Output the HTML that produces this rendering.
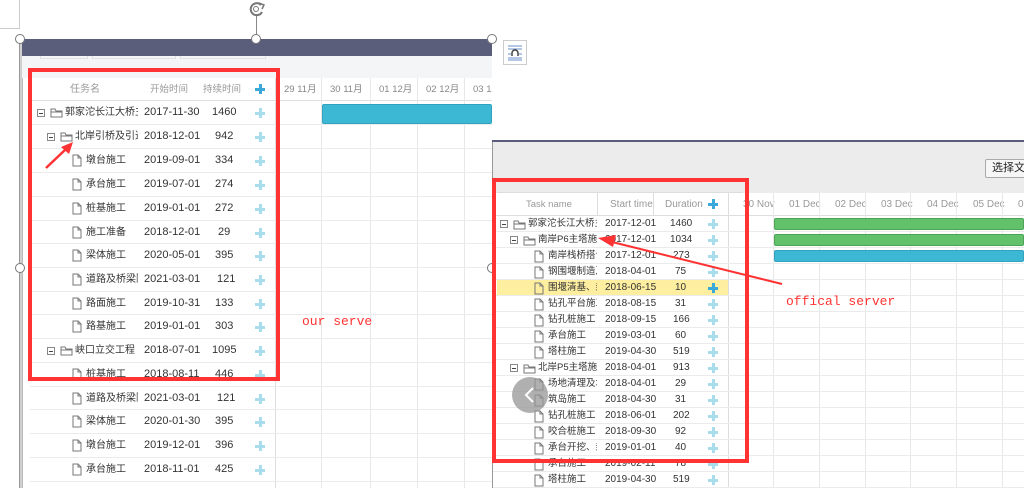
<!DOCTYPE html>
<html><head><meta charset="utf-8">
<style>
*{margin:0;padding:0;box-sizing:border-box}
body{width:1024px;height:488px;overflow:hidden;background:#fff;position:relative;font-family:"Liberation Sans","Noto Sans CJK SC",sans-serif;color:#333}
.a{position:absolute}
.L{font-size:11px}
.R{font-size:10px}
.row{position:absolute;left:0;border-bottom:1px solid #ebebeb}
.row span{position:absolute;white-space:nowrap;overflow:hidden}
.L .row span{top:0!important;line-height:23px;height:23px}
.R .row span{top:0!important;line-height:15px;height:15px}
.L .row span:nth-of-type(1){font-size:10px}
.R .row span:nth-of-type(1){font-size:9.5px}
.p{position:absolute;width:10px;height:10px}
.p:before{content:"";position:absolute;left:3.5px;top:0;width:3px;height:10px;background:#a9dcec}
.p:after{content:"";position:absolute;left:0;top:3.5px;width:10px;height:3px;background:#a9dcec}
.p.d:before,.p.d:after{background:#3aa8d8}
.ex{position:absolute;width:8px;height:8px;border:1px solid #888;background:#fff}
.ex:after{content:"";position:absolute;left:1px;top:2.5px;width:4px;height:1px;background:#444}
.ic{position:absolute}
.vl{position:absolute;width:1px;background:#e8e8e8}
.h{position:absolute;width:10px;height:10px;border:1.5px solid #777;border-radius:50%;background:#fff}
</style></head><body>

<div class="a" style="left:0;top:0;width:20px;height:29px;border-right:1px solid #ccc;border-bottom:1px solid #ccc"></div>
<div class="a" style="left:19px;top:40px;width:5px;height:448px;background:#d0d0d0;border-left:1px solid #999"></div>

<div class="a" style="left:22px;top:39px;width:470px;height:449px;background:#fff;border-left:1px solid #bbb;border-right:1px solid #bbb"></div>
<div class="a" style="left:22px;top:39px;width:470px;height:17px;background:#5b5e7b"></div>
<div class="a" style="left:22px;top:56px;width:470px;height:22px;background:#f4f5f7"></div>
<div class="a" style="left:40px;top:56px;width:48px;height:3px;border:1px solid #e2e2e2;border-top:none"></div>
<div class="a" style="left:92px;top:56px;width:84px;height:3px;border:1px solid #e2e2e2;border-top:none"></div>
<div class="a" style="left:180px;top:56px;width:86px;height:3px;border:1px solid #e2e2e2;border-top:none"></div>

<div class="a L" style="left:30px;top:78px;width:462px;height:410px;overflow:hidden;background:#fff">
 <div class="row" style="top:0;width:462px;height:23px;border-bottom:1px solid #e0e0e0;color:#999;font-size:9.5px">
  <span style="left:40px">任务名</span><span style="left:120px">开始时间</span><span style="left:173px">持续时间</span>
  <div class="p d" style="left:225px;top:6px"></div>
  <span style="left:254px;color:#888">29 11月</span><span style="left:300px;color:#888">30 11月</span><span style="left:349px;color:#888">01 12月</span><span style="left:396px;color:#888">02 12月</span><span style="left:443px;color:#888">03 12月</span>
 </div>
 <div class="vl" style="left:245px;top:0;height:410px;background:#ddd"></div>
 <div class="vl" style="left:291px;top:0;height:410px"></div>
 <div class="vl" style="left:340px;top:0;height:410px"></div>
 <div class="vl" style="left:387px;top:0;height:410px"></div>
 <div class="vl" style="left:434px;top:0;height:410px"></div>
 <div class="a" style="left:292px;top:26px;width:170px;height:20px;background:#3db8d4;border:1px solid #2fa3c0;border-radius:2px"></div>

 <div class="row" style="top:23px;width:462px;height:24px"><div class="ex" style="left:7px;top:8px"></div><svg class="ic" style="left:20px;top:6px" width="13" height="11"><path d="M1 3V10H12V4H6L5 2H1Z M1 5H12" fill="none" stroke="#777"/></svg><span style="left:35px;width:73px">郭家沱长江大桥主</span><span style="left:114px">2017-11-30</span><span style="left:182px">1460</span><div class="p" style="left:225px;top:7px"></div></div>
 <div class="row" style="top:47px;width:462px;height:24px"><div class="ex" style="left:17px;top:8px"></div><svg class="ic" style="left:30px;top:6px" width="13" height="11"><path d="M1 3V10H12V4H6L5 2H1Z M1 5H12" fill="none" stroke="#777"/></svg><span style="left:45px;width:63px">北岸引桥及引道</span><span style="left:114px">2018-12-01</span><span style="left:185px">942</span><div class="p" style="left:225px;top:7px"></div></div>
 <div class="row" style="top:71px;width:462px;height:24px"><svg class="ic" style="left:42px;top:5px" width="10" height="13"><path d="M1 1H6L9 4V12H1Z M6 1V4H9" fill="none" stroke="#777"/></svg><span style="left:56px">墩台施工</span><span style="left:114px">2019-09-01</span><span style="left:185px">334</span><div class="p" style="left:225px;top:7px"></div></div>
 <div class="row" style="top:95px;width:462px;height:24px"><svg class="ic" style="left:42px;top:5px" width="10" height="13"><path d="M1 1H6L9 4V12H1Z M6 1V4H9" fill="none" stroke="#777"/></svg><span style="left:56px">承台施工</span><span style="left:114px">2019-07-01</span><span style="left:185px">274</span><div class="p" style="left:225px;top:7px"></div></div>
 <div class="row" style="top:119px;width:462px;height:24px"><svg class="ic" style="left:42px;top:5px" width="10" height="13"><path d="M1 1H6L9 4V12H1Z M6 1V4H9" fill="none" stroke="#777"/></svg><span style="left:56px">桩基施工</span><span style="left:114px">2019-01-01</span><span style="left:185px">272</span><div class="p" style="left:225px;top:7px"></div></div>
 <div class="row" style="top:143px;width:462px;height:23px"><svg class="ic" style="left:42px;top:5px" width="10" height="13"><path d="M1 1H6L9 4V12H1Z M6 1V4H9" fill="none" stroke="#777"/></svg><span style="left:56px">施工准备</span><span style="left:114px">2018-12-01</span><span style="left:188px">29</span><div class="p" style="left:225px;top:7px"></div></div>
 <div class="row" style="top:166px;width:462px;height:24px"><svg class="ic" style="left:42px;top:5px" width="10" height="13"><path d="M1 1H6L9 4V12H1Z M6 1V4H9" fill="none" stroke="#777"/></svg><span style="left:56px">梁体施工</span><span style="left:114px">2020-05-01</span><span style="left:185px">395</span><div class="p" style="left:225px;top:7px"></div></div>
 <div class="row" style="top:190px;width:462px;height:24px"><svg class="ic" style="left:42px;top:5px" width="10" height="13"><path d="M1 1H6L9 4V12H1Z M6 1V4H9" fill="none" stroke="#777"/></svg><span style="left:56px;width:52px">道路及桥梁附</span><span style="left:114px">2021-03-01</span><span style="left:187px">121</span><div class="p" style="left:225px;top:7px"></div></div>
 <div class="row" style="top:214px;width:462px;height:23px"><svg class="ic" style="left:42px;top:5px" width="10" height="13"><path d="M1 1H6L9 4V12H1Z M6 1V4H9" fill="none" stroke="#777"/></svg><span style="left:56px">路面施工</span><span style="left:114px">2019-10-31</span><span style="left:185px">133</span><div class="p" style="left:225px;top:7px"></div></div>
 <div class="row" style="top:237px;width:462px;height:24px"><svg class="ic" style="left:42px;top:5px" width="10" height="13"><path d="M1 1H6L9 4V12H1Z M6 1V4H9" fill="none" stroke="#777"/></svg><span style="left:56px">路基施工</span><span style="left:114px">2019-01-01</span><span style="left:185px">303</span><div class="p" style="left:225px;top:7px"></div></div>
 <div class="row" style="top:261px;width:462px;height:24px"><div class="ex" style="left:17px;top:8px"></div><svg class="ic" style="left:30px;top:6px" width="13" height="11"><path d="M1 3V10H12V4H6L5 2H1Z M1 5H12" fill="none" stroke="#777"/></svg><span style="left:45px">峡口立交工程</span><span style="left:114px">2018-07-01</span><span style="left:182px">1095</span><div class="p" style="left:225px;top:7px"></div></div>
 <div class="row" style="top:285px;width:462px;height:24px"><svg class="ic" style="left:42px;top:5px" width="10" height="13"><path d="M1 1H6L9 4V12H1Z M6 1V4H9" fill="none" stroke="#777"/></svg><span style="left:56px">桩基施工</span><span style="left:114px">2018-08-11</span><span style="left:185px">446</span><div class="p" style="left:225px;top:7px"></div></div>
 <div class="row" style="top:309px;width:462px;height:23px"><svg class="ic" style="left:42px;top:5px" width="10" height="13"><path d="M1 1H6L9 4V12H1Z M6 1V4H9" fill="none" stroke="#777"/></svg><span style="left:56px;width:52px">道路及桥梁附</span><span style="left:114px">2021-03-01</span><span style="left:187px">121</span><div class="p" style="left:225px;top:7px"></div></div>
 <div class="row" style="top:332px;width:462px;height:24px"><svg class="ic" style="left:42px;top:5px" width="10" height="13"><path d="M1 1H6L9 4V12H1Z M6 1V4H9" fill="none" stroke="#777"/></svg><span style="left:56px">梁体施工</span><span style="left:114px">2020-01-30</span><span style="left:185px">395</span><div class="p" style="left:225px;top:7px"></div></div>
 <div class="row" style="top:356px;width:462px;height:24px"><svg class="ic" style="left:42px;top:5px" width="10" height="13"><path d="M1 1H6L9 4V12H1Z M6 1V4H9" fill="none" stroke="#777"/></svg><span style="left:56px">墩台施工</span><span style="left:114px">2019-12-01</span><span style="left:185px">396</span><div class="p" style="left:225px;top:7px"></div></div>
 <div class="row" style="top:380px;width:462px;height:24px"><svg class="ic" style="left:42px;top:5px" width="10" height="13"><path d="M1 1H6L9 4V12H1Z M6 1V4H9" fill="none" stroke="#777"/></svg><span style="left:56px">承台施工</span><span style="left:114px">2018-11-01</span><span style="left:185px">425</span><div class="p" style="left:225px;top:7px"></div></div>
</div>

<div class="a" style="left:256px;top:14px;width:1px;height:25px;background:#888"></div>
<svg class="a" style="left:246px;top:0" width="22" height="18"><path d="M15 5A6 6 0 1 0 16 12" fill="none" stroke="#777" stroke-width="2"/><path d="M13 3L18 5L16 9" fill="none" stroke="#777" stroke-width="1.5"/><circle cx="10" cy="9" r="2.5" fill="none" stroke="#777"/></svg>
<div class="h" style="left:15px;top:34px"></div>
<div class="h" style="left:251px;top:34px"></div>
<div class="h" style="left:487px;top:34px"></div>
<div class="h" style="left:15px;top:263px"></div>
<div class="h" style="left:487px;top:263px"></div>
<div class="a" style="left:503px;top:40px;width:24px;height:25px;border:1px solid #ccc;background:#fff"></div>
<svg class="a" style="left:506px;top:44px" width="18" height="18"><path d="M2 2H16M2 5H16M2 14H16M2 16H16M2 10H5M13 10H16" stroke="#6a8fc8"/><path d="M6 12V9A3 3 0 0 1 12 9V12" fill="none" stroke="#444" stroke-width="1.5"/></svg>

<div class="a" style="left:492px;top:140px;width:532px;height:2px;background:#5b5e7b"></div>
<div class="a" style="left:492px;top:142px;width:532px;height:346px;background:#ececec;border-left:1px solid #999"></div>
<div class="a" style="left:985px;top:159px;width:45px;height:19px;border:1px solid #aaa;background:#f6f6f6;border-radius:2px;font-size:11px;line-height:17px;padding-left:6px;color:#222">选择文</div>
<div class="a R" style="left:493px;top:193px;width:531px;height:295px;background:#fff;overflow:hidden">
 <div class="row" style="top:0;width:531px;height:23px;border-bottom:1px solid #ddd;color:#999">
  <span style="left:33px;line-height:23px;height:23px">Task name</span><span style="left:117px;line-height:23px;height:23px">Start time</span><span style="left:172px;line-height:23px;height:23px">Duration</span>
  <div class="p d" style="left:215px;top:6px"></div>
  <span style="left:250px;line-height:23px;height:23px">30 Nov</span><span style="left:296px;line-height:23px;height:23px">01 Dec</span><span style="left:342px;line-height:23px;height:23px">02 Dec</span><span style="left:388px;line-height:23px;height:23px">03 Dec</span><span style="left:434px;line-height:23px;height:23px">04 Dec</span><span style="left:480px;line-height:23px;height:23px">05 Dec</span><span style="left:525px;line-height:23px;height:23px">06</span>
 </div>
 <div class="vl" style="left:104px;top:0;height:23px;background:#ddd"></div>
 <div class="vl" style="left:160px;top:0;height:23px;background:#ddd"></div>
 <div class="vl" style="left:235px;top:0;height:295px;background:#ddd"></div>
 <div class="vl" style="left:280px;top:0;height:295px"></div>
 <div class="vl" style="left:326px;top:0;height:295px"></div>
 <div class="vl" style="left:372px;top:0;height:295px"></div>
 <div class="vl" style="left:417px;top:0;height:295px"></div>
 <div class="vl" style="left:463px;top:0;height:295px"></div>
 <div class="vl" style="left:509px;top:0;height:295px"></div>
 <div class="a" style="left:4px;top:87px;width:231px;height:16px;background:#fdeea0"></div>
 <div class="a" style="left:281px;top:25px;width:250px;height:12px;background:#63c16b;border:1px solid #4ea456;border-radius:2px"></div>
 <div class="a" style="left:281px;top:41px;width:250px;height:12px;background:#63c16b;border:1px solid #4ea456;border-radius:2px"></div>
 <div class="a" style="left:281px;top:57px;width:250px;height:12px;background:#3db8d4;border:1px solid #2fa3c0;border-radius:2px"></div>

 <div class="row" style="top:23px;width:531px;height:16px"><div class="ex" style="left:7px;top:4px"></div><svg class="ic" style="left:20px;top:3px" width="13" height="11"><path d="M1 3V10H12V4H6L5 2H1Z M1 5H12" fill="none" stroke="#777"/></svg><span style="left:35px;width:69px">郭家沱长江大桥主</span><span style="left:112px">2017-12-01</span><span style="left:177px">1460</span><div class="p" style="left:215px;top:3px"></div></div>
 <div class="row" style="top:39px;width:531px;height:16px"><div class="ex" style="left:17px;top:4px"></div><svg class="ic" style="left:30px;top:3px" width="13" height="11"><path d="M1 3V10H12V4H6L5 2H1Z M1 5H12" fill="none" stroke="#777"/></svg><span style="left:45px;width:59px">南岸P6主塔施工</span><span style="left:112px">2017-12-01</span><span style="left:177px">1034</span><div class="p" style="left:215px;top:3px"></div></div>
 <div class="row" style="top:55px;width:531px;height:16px"><svg class="ic" style="left:41px;top:2px" width="10" height="13"><path d="M1 1H6L9 4V12H1Z M6 1V4H9" fill="none" stroke="#777"/></svg><span style="left:55px;width:49px">南岸栈桥搭设</span><span style="left:112px">2017-12-01</span><span style="left:180px">273</span><div class="p" style="left:215px;top:3px"></div></div>
 <div class="row" style="top:71px;width:531px;height:16px"><svg class="ic" style="left:41px;top:2px" width="10" height="13"><path d="M1 1H6L9 4V12H1Z M6 1V4H9" fill="none" stroke="#777"/></svg><span style="left:55px;width:49px">钢围堰制造及</span><span style="left:112px">2018-04-01</span><span style="left:182px">75</span><div class="p" style="left:215px;top:3px"></div></div>
 <div class="row" style="top:87px;width:531px;height:16px"><svg class="ic" style="left:41px;top:2px" width="10" height="13"><path d="M1 1H6L9 4V12H1Z M6 1V4H9" fill="none" stroke="#777"/></svg><span style="left:55px;width:49px">围堰清基、封</span><span style="left:112px">2018-06-15</span><span style="left:182px">10</span><div class="p d" style="left:215px;top:3px"></div></div>
 <div class="row" style="top:103px;width:531px;height:16px"><svg class="ic" style="left:41px;top:2px" width="10" height="13"><path d="M1 1H6L9 4V12H1Z M6 1V4H9" fill="none" stroke="#777"/></svg><span style="left:55px;width:49px">钻孔平台施工</span><span style="left:112px">2018-08-15</span><span style="left:182px">31</span><div class="p" style="left:215px;top:3px"></div></div>
 <div class="row" style="top:119px;width:531px;height:16px"><svg class="ic" style="left:41px;top:2px" width="10" height="13"><path d="M1 1H6L9 4V12H1Z M6 1V4H9" fill="none" stroke="#777"/></svg><span style="left:55px">钻孔桩施工</span><span style="left:112px">2018-09-15</span><span style="left:180px">166</span><div class="p" style="left:215px;top:3px"></div></div>
 <div class="row" style="top:135px;width:531px;height:16px"><svg class="ic" style="left:41px;top:2px" width="10" height="13"><path d="M1 1H6L9 4V12H1Z M6 1V4H9" fill="none" stroke="#777"/></svg><span style="left:55px">承台施工</span><span style="left:112px">2019-03-01</span><span style="left:182px">60</span><div class="p" style="left:215px;top:3px"></div></div>
 <div class="row" style="top:151px;width:531px;height:16px"><svg class="ic" style="left:41px;top:2px" width="10" height="13"><path d="M1 1H6L9 4V12H1Z M6 1V4H9" fill="none" stroke="#777"/></svg><span style="left:55px">塔柱施工</span><span style="left:112px">2019-04-30</span><span style="left:180px">519</span><div class="p" style="left:215px;top:3px"></div></div>
 <div class="row" style="top:167px;width:531px;height:16px"><div class="ex" style="left:17px;top:4px"></div><svg class="ic" style="left:30px;top:3px" width="13" height="11"><path d="M1 3V10H12V4H6L5 2H1Z M1 5H12" fill="none" stroke="#777"/></svg><span style="left:45px;width:59px">北岸P5主塔施工</span><span style="left:112px">2018-04-01</span><span style="left:180px">913</span><div class="p" style="left:215px;top:3px"></div></div>
 <div class="row" style="top:183px;width:531px;height:16px"><svg class="ic" style="left:41px;top:2px" width="10" height="13"><path d="M1 1H6L9 4V12H1Z M6 1V4H9" fill="none" stroke="#777"/></svg><span style="left:55px;width:49px">场地清理及场</span><span style="left:112px">2018-04-01</span><span style="left:182px">29</span><div class="p" style="left:215px;top:3px"></div></div>
 <div class="row" style="top:199px;width:531px;height:16px"><svg class="ic" style="left:41px;top:2px" width="10" height="13"><path d="M1 1H6L9 4V12H1Z M6 1V4H9" fill="none" stroke="#777"/></svg><span style="left:55px">筑岛施工</span><span style="left:112px">2018-04-30</span><span style="left:182px">31</span><div class="p" style="left:215px;top:3px"></div></div>
 <div class="row" style="top:215px;width:531px;height:16px"><svg class="ic" style="left:41px;top:2px" width="10" height="13"><path d="M1 1H6L9 4V12H1Z M6 1V4H9" fill="none" stroke="#777"/></svg><span style="left:55px">钻孔桩施工</span><span style="left:112px">2018-06-01</span><span style="left:180px">202</span><div class="p" style="left:215px;top:3px"></div></div>
 <div class="row" style="top:231px;width:531px;height:16px"><svg class="ic" style="left:41px;top:2px" width="10" height="13"><path d="M1 1H6L9 4V12H1Z M6 1V4H9" fill="none" stroke="#777"/></svg><span style="left:55px">咬合桩施工</span><span style="left:112px">2018-09-30</span><span style="left:182px">92</span><div class="p" style="left:215px;top:3px"></div></div>
 <div class="row" style="top:247px;width:531px;height:16px"><svg class="ic" style="left:41px;top:2px" width="10" height="13"><path d="M1 1H6L9 4V12H1Z M6 1V4H9" fill="none" stroke="#777"/></svg><span style="left:55px;width:49px">承台开挖、封</span><span style="left:112px">2019-01-01</span><span style="left:182px">40</span><div class="p" style="left:215px;top:3px"></div></div>
 <div class="row" style="top:263px;width:531px;height:16px"><svg class="ic" style="left:41px;top:2px" width="10" height="13"><path d="M1 1H6L9 4V12H1Z M6 1V4H9" fill="none" stroke="#777"/></svg><span style="left:55px">承台施工</span><span style="left:112px">2019-02-11</span><span style="left:182px">78</span><div class="p" style="left:215px;top:3px"></div></div>
 <div class="row" style="top:279px;width:531px;height:16px"><svg class="ic" style="left:41px;top:2px" width="10" height="13"><path d="M1 1H6L9 4V12H1Z M6 1V4H9" fill="none" stroke="#777"/></svg><span style="left:55px">塔柱施工</span><span style="left:112px">2019-04-30</span><span style="left:180px">519</span><div class="p" style="left:215px;top:3px"></div></div>
</div>
<div class="a" style="left:497px;top:180px;width:246px;height:13px;background:#ececec;border-bottom:1px solid #ddd"></div>

<div class="a" style="left:512px;top:377px;width:36px;height:36px;border-radius:50%;background:rgba(150,150,150,0.75)"></div>
<svg class="a" style="left:512px;top:377px" width="36" height="36"><path d="M21 11L14 18L21 25" fill="none" stroke="#fff" stroke-width="2"/></svg>

<div class="a" style="left:28px;top:68px;width:252px;height:313px;border:4px solid #f33"></div>
<div class="a" style="left:492px;top:178px;width:257px;height:285px;border:4px solid #f33"></div>

<svg class="a" style="left:0;top:0" width="1024" height="488">
 <path d="M46 168L66 149" stroke="#f33" stroke-width="2.5"/>
 <path d="M73 142L61 147L69 154Z" fill="#f33"/>
 <path d="M782 284L612 242" stroke="#f33" stroke-width="2"/>
 <path d="M598 238L616 235L613 247Z" fill="#f33"/>
</svg>
<div class="a" style="left:302px;top:314px;font-family:'Liberation Mono',monospace;font-size:13px;color:#f33">our serve</div>
<div class="a" style="left:786px;top:294px;font-family:'Liberation Mono',monospace;font-size:13px;color:#f33">offical server</div>
</body></html>
